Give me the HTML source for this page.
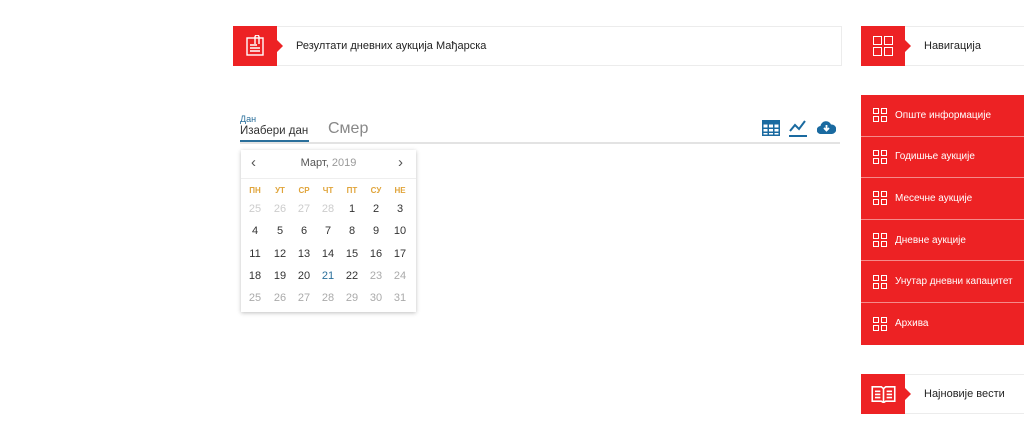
<!DOCTYPE html>
<html><head><meta charset="utf-8"><style>
*{box-sizing:border-box;margin:0;padding:0}
body{width:1024px;height:424px;background:#fff;font-family:"Liberation Sans",sans-serif;position:relative;overflow:hidden;color:#222}
.box{position:absolute;border:1px solid #ececec;background:#fff}
.red{position:absolute;background:#ed2224}
.tri{position:absolute;width:0;height:0;border-top:6px solid transparent;border-bottom:6px solid transparent;border-left:6px solid #ed2224}
.t{position:absolute;font-size:11px;color:#222}
.menu{position:absolute;left:861px;top:95px;width:163px;background:#ed2224}
.mi{height:41.6px;border-bottom:1px solid #f58a8a;color:#fff;font-size:10px;display:flex;align-items:center;padding-left:12px;white-space:nowrap}
.mi:last-child{border-bottom:none}
.g{width:14px;height:14px;margin-right:8px;display:grid;grid-template-columns:6px 6px;gap:2px}
.g i{border:1.3px solid #fff;display:block}
.cal{position:absolute;left:241px;top:150px;width:175px;height:162px;background:#fff;box-shadow:0 1px 4px rgba(0,0,0,.25);font-size:11px}
.c{position:absolute;width:24px;text-align:center;transform:translateX(-12px)}
</style></head><body>
<div class="box" style="left:233px;top:26px;width:609px;height:40px"></div>
<div class="red" style="left:233px;top:26px;width:44px;height:40px"></div>
<div class="tri" style="left:277px;top:40px"></div>
<svg style="position:absolute;left:246px;top:35px" width="18" height="21" viewBox="0 0 18 21" fill="none" stroke="#fff" stroke-width="1.4"><rect x="1" y="3" width="16" height="17"/><path d="M4 10h7M4 13h10M4 16h10"/><path d="M9 9V2a2 2 0 0 1 4 0v7" /></svg>
<div class="t" style="left:296px;top:40px">Резултати дневних аукција Мађарска</div>

<div class="box" style="left:861px;top:26px;width:170px;height:40px"></div>
<div class="red" style="left:861px;top:26px;width:44px;height:40px"></div>
<div class="tri" style="left:905px;top:40px"></div>
<div class="g" style="position:absolute;left:873px;top:36px;width:20px;height:20px;grid-template-columns:9px 9px;gap:2px"><i style="border-width:1.8px"></i><i style="border-width:1.8px"></i><i style="border-width:1.8px"></i><i style="border-width:1.8px"></i></div>
<div class="t" style="left:924px;top:40px">Навигација</div>

<div class="menu">
<div class="mi"><span class="g"><i></i><i></i><i></i><i></i></span>Опште информације</div>
<div class="mi"><span class="g"><i></i><i></i><i></i><i></i></span>Годишње аукције</div>
<div class="mi"><span class="g"><i></i><i></i><i></i><i></i></span>Месечне аукције</div>
<div class="mi"><span class="g"><i></i><i></i><i></i><i></i></span>Дневне аукције</div>
<div class="mi"><span class="g"><i></i><i></i><i></i><i></i></span>Унутар дневни капацитет</div>
<div class="mi"><span class="g"><i></i><i></i><i></i><i></i></span>Архива</div>
</div>

<div class="box" style="left:861px;top:374px;width:170px;height:40px"></div>
<div class="red" style="left:861px;top:374px;width:44px;height:40px"></div>
<div class="tri" style="left:905px;top:388px"></div>
<svg style="position:absolute;left:871px;top:385px" width="25" height="18" viewBox="0 0 27 20" fill="none" stroke="#fff" stroke-width="1.8"><path d="M1 2h10l2.5 2 2.5-2h10v16H16l-2.5 1.5L11 18H1z"/><path d="M13.5 4v15M4 7h6M4 10.5h6M4 14h6M17 7h6M17 10.5h6M17 14h6"/></svg>
<div class="t" style="left:924px;top:388px">Најновије вести</div>

<div style="position:absolute;left:240px;top:114px;font-size:9px;color:#2a6f9b">Дан</div>
<div style="position:absolute;left:240px;top:125px;font-size:11.5px;color:#333">Изабери дан</div>
<div style="position:absolute;left:240px;top:140px;width:69px;height:2px;background:#2a6f9b"></div>
<div style="position:absolute;left:328px;top:120px;font-size:16px;color:#888">Смер</div>
<div style="position:absolute;left:240px;top:142px;width:600px;height:2px;background:#e3e3e3"></div>
<svg style="position:absolute;left:762px;top:120px" width="18" height="16" viewBox="0 0 18 16" fill="#1a6aa0"><path d="M0 0h18v16H0zM1.5 4.5v3h4v-3zm5.5 0v3h4v-3zm5.5 0v3h4v-3zM1.5 9v2.5h4V9zm5.5 0v2.5h4V9zm5.5 0v2.5h4V9zM1.5 13v1.5h4V13zm5.5 0v1.5h4V13zm5.5 0v1.5h4V13z" fill-rule="evenodd"/></svg>
<svg style="position:absolute;left:789px;top:119px" width="18" height="18" viewBox="0 0 18 18" fill="none" stroke="#1a6aa0" stroke-width="2"><path d="M1 12l5-6 4 4 6-8"/><path d="M0 17h18"/></svg>
<svg style="position:absolute;left:817px;top:120px" width="19" height="14" viewBox="0 0 19 14"><path d="M4 14a4 4 0 0 1-.5-8A5.5 5.5 0 0 1 14 4.5 4.5 4.5 0 0 1 15 14z" fill="#1a6aa0"/><path d="M9.5 5v5M7 8l2.5 2.5L12 8" stroke="#fff" stroke-width="1.8" fill="none"/></svg>

<div class="cal">
<div style="position:absolute;left:10px;top:4px;font-size:15px;color:#555">‹</div>
<div style="position:absolute;left:0;width:175px;top:7px;text-align:center;color:#555;font-size:11px">Март, <span style="color:#999">2019</span></div>
<div style="position:absolute;left:157px;top:4px;font-size:15px;color:#555">›</div>
<div style="position:absolute;left:0;top:28px;width:175px;height:1px;background:#eee"></div>
<div id="g"></div>
</div>
<script>
var g=document.getElementById('g'),h=['ПН','УТ','СР','ЧТ','ПТ','СУ','НЕ'],s='';
var xs=[14,39,63,87,111,135,159];
h.forEach((d,i)=>s+='<div class="c" style="left:'+xs[i]+'px;top:36px;font-size:8px;font-weight:bold;color:#e0a43a">'+d+'</div>');
var rows=[[25,26,27,28,1,2,3],[4,5,6,7,8,9,10],[11,12,13,14,15,16,17],[18,19,20,21,22,23,24],[25,26,27,28,29,30,31]];
rows.forEach((r,ri)=>r.forEach((d,i)=>{var c='#333';if(ri==0&&i<4)c='#ccc';if(ri==3&&i>4)c='#aaa';if(ri==4)c='#aaa';if(ri==3&&i==3)c='#2a6f9b';s+='<div class="c" style="left:'+xs[i]+'px;top:'+(53+ri*22.3)+'px;color:'+c+'">'+d+'</div>'}));
g.innerHTML=s;
</script>
</body></html>
